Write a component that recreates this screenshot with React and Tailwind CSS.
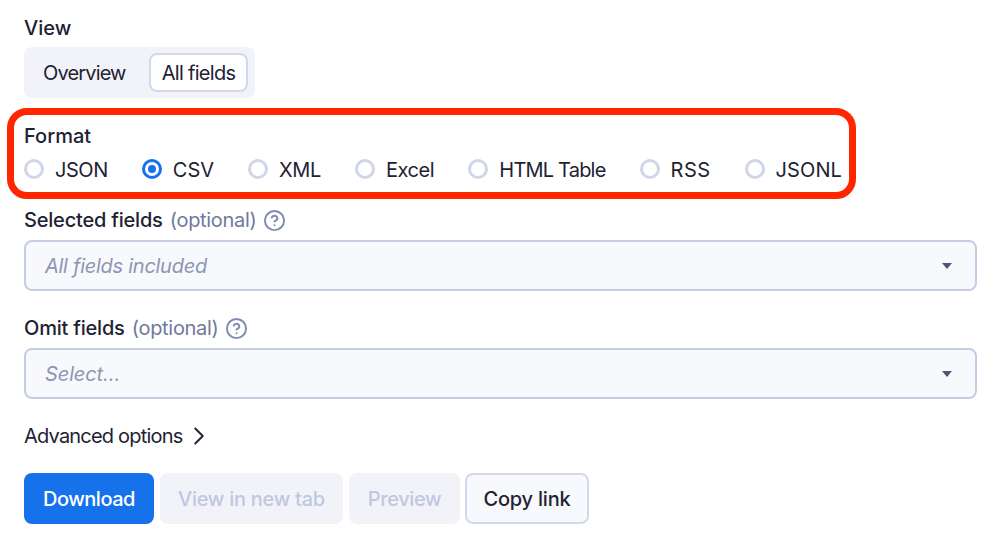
import { ChevronRight, CircleHelp } from "lucide-react";

const formats = [
    { name: "JSON", tracking: "tracking-[-0.45px]" },
    { name: "CSV", tracking: "tracking-normal" },
    { name: "XML", tracking: "tracking-[-0.4px]" },
    { name: "Excel", tracking: "tracking-[-0.4px]" },
    { name: "HTML Table", tracking: "tracking-[-0.8px]" },
    { name: "RSS", tracking: "tracking-[0.5px]" },
    { name: "JSONL", tracking: "tracking-[0.1px]" },
];

function FieldSelect({ label, placeholder, placeholderTracking }) {
    return (
        <div>
            <div className="flex items-center h-6 text-[20px] leading-6 text-[#1e2233]">
                <span className="font-medium tracking-[-0.2px]">{label}</span>
                <span className="ml-[7px] tracking-[-0.3px] text-[#6f7a9c]">(optional)</span>
                <CircleHelp className="ml-[6px] w-[23px] h-[23px] text-[#7f8bb0]" strokeWidth={2} />
            </div>
            <div className="mt-2 h-[51px] flex items-center justify-between pl-[19px] pr-[23px] rounded-lg border-2 border-[#c5cce6] bg-[#f8f9fc]">
                <span className={`text-[20px] italic text-[#8c96b3] ${placeholderTracking}`}>{placeholder}</span>
                <span className="w-0 h-0 border-x-[5.5px] border-x-transparent border-t-[6px] border-t-[#4f5670]" />
            </div>
        </div>
    );
}

export default function App() {
    return (
        <div className="relative w-[1000px] h-[540px] overflow-hidden bg-white pl-6 pr-[23px] pt-4 text-[20px] text-[#1e2233] [font-family:Inter,sans-serif]">
            <div className="h-6 leading-6 font-medium">View</div>
            <div className="mt-[7px] w-[231px] h-[51px] flex items-center justify-between pl-[19px] pr-[7px] rounded-lg bg-[#f2f3f9]">
                <span className="tracking-[-0.85px]">Overview</span>
                <span className="w-[99px] h-[39px] flex items-center justify-center rounded-lg bg-white border-2 border-[#d3d8ec] tracking-[-0.7px]">All fields</span>
            </div>

            <div className="mt-[26px] h-6 leading-6 font-medium">Format</div>
            <div className="mt-[9px] h-6 flex items-center gap-[34px]">
                {formats.map((f) => (
                    <div key={f.name} className="flex items-center gap-[11px]">
                        {f.name === "CSV" ? (
                            <span className="w-5 h-5 rounded-full border-[3px] border-[#1672eb] flex items-center justify-center">
                                <span className="w-2 h-2 rounded-full bg-[#1672eb]" />
                            </span>
                        ) : (
                            <span className="w-5 h-5 rounded-full border-[3px] border-[#d0d5e9]" />
                        )}
                        <span className={`mt-px leading-6 ${f.tracking}`}>{f.name}</span>
                    </div>
                ))}
            </div>

            <div className="mt-[27px] flex flex-col gap-[25px]">
                <FieldSelect label="Selected fields" placeholder="All fields included" placeholderTracking="tracking-[-0.27px]" />
                <FieldSelect label="Omit fields" placeholder="Select..." placeholderTracking="tracking-[-0.1px]" />
            </div>

            <div className="mt-[25px] h-6 flex items-center gap-[2px]">
                <span className="leading-6 tracking-[-0.8px]">Advanced options</span>
                <ChevronRight className="w-[30px] h-[30px] shrink-0 text-[#1e2233]" strokeWidth={1.5} />
            </div>

            <div className="mt-[25px] flex gap-[6px] font-medium">
                <button className="w-[130px] h-[51px] rounded-lg bg-[#1672eb] text-white tracking-[-0.5px]">Download</button>
                <button className="w-[183px] h-[51px] rounded-lg bg-[#f2f3f9] text-[#c0c7e0] tracking-[-0.27px]">View in new tab</button>
                <button className="w-[111px] h-[51px] rounded-lg bg-[#f2f3f9] text-[#c0c7e0] tracking-[-0.4px]">Preview</button>
                <button className="w-[124px] h-[51px] -ml-px rounded-lg bg-[#f8f9fc] border-2 border-[#d3d8ec] text-[#1e2233] tracking-[-0.2px]">Copy link</button>
            </div>

            {/* red annotation drawn over the format row */}
            <div className="absolute left-[7px] top-[108px] w-[849px] h-[91px] rounded-[20px] border-[7px] border-[#ff2600]" />
        </div>
    );
}
